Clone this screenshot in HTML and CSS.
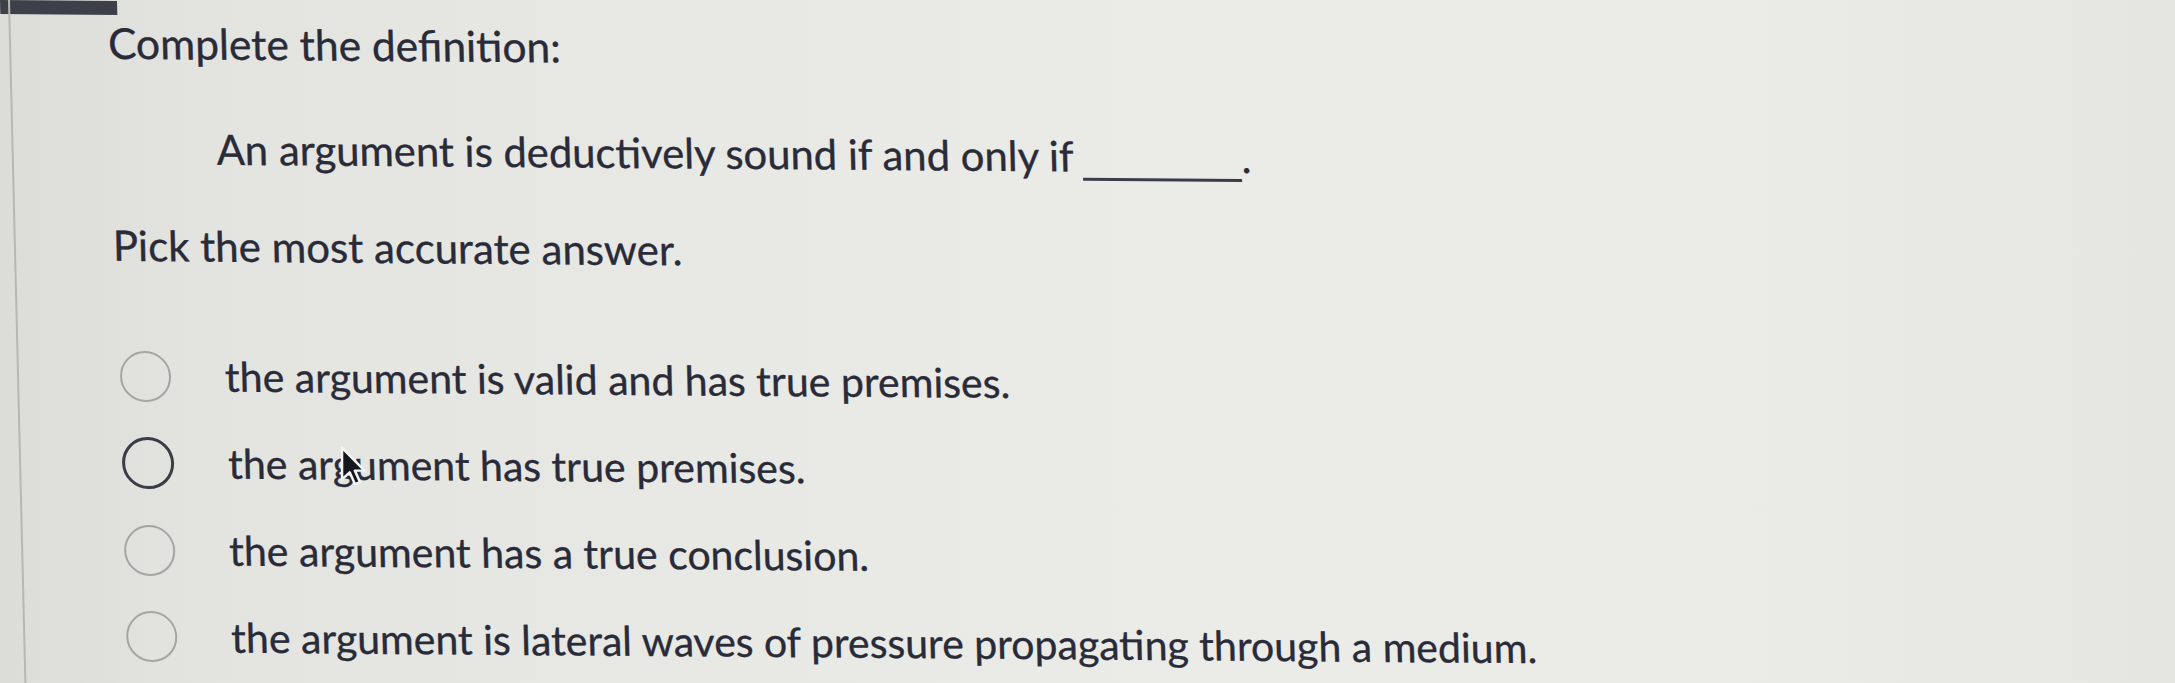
FILE: index.html
```html
<!DOCTYPE html>
<html lang="en">
<head>
<meta charset="utf-8">
<title>Quiz question</title>
<link rel="stylesheet" href="styles.css">
</head>
<body>
<div class="page">
  <div class="topbar"></div>
  <div class="panel">
    <h1 class="title">Complete the definition:</h1>
    <p class="prompt">An argument is deductively sound if and only if<span class="blank"></span>.</p>
    <p class="instruction">Pick the most accurate answer.</p>
    <ul class="options">
      <li class="option"><span class="radio"></span><span class="label">the argument is valid and has true premises.</span></li>
      <li class="option option-hover"><span class="radio"></span><span class="label">the argument has true premises.</span></li>
      <li class="option"><span class="radio"></span><span class="label">the argument has a true conclusion.</span></li>
      <li class="option"><span class="radio"></span><span class="label">the argument is lateral waves of pressure propagating through a medium.</span></li>
    </ul>
  </div>
</div>
<svg class="cursor" width="27" height="42" viewBox="0 0 14 22" aria-hidden="true">
  <path d="M1 1 L1 17.5 L5 13.8 L7.8 20 L10.4 18.9 L7.7 12.9 L12.8 12.9 Z" fill="#15161c" stroke="#f4f4f2" stroke-width="1.3" stroke-linejoin="round"/>
</svg>
</body>
</html>
```

FILE: styles.css
```css
html, body {
  margin: 0;
  padding: 0;
}

body {
  width: 2175px;
  height: 683px;
  overflow: hidden;
  position: relative;
  background: linear-gradient(90deg, #dcdcd9 0px, #e3e3e0 200px, #e8e8e5 700px, #ebebe8 1300px, #eaeae7 1800px, #e5e5e2 2175px);
  font-family: "Lato", "Liberation Sans", sans-serif;
  color: #292b38;
}

.page {
  display: flex;
  flex-direction: column;
  height: 683px;
  transform-origin: 0 0;
  transform: matrix(1, 0.008, 0.024, 1, 0, 0);
}

.topbar {
  width: 117px;
  height: 14px;
  background: #3c4149;
  flex: none;
}

.panel {
  flex: 1;
  margin-left: 8px;
  margin-top: -14px;
  padding-top: 14px;
  padding-left: 97px;
  border-left: 2px solid #b7b7b4;
  -webkit-text-stroke: 0.35px #292b38;
}

.title {
  margin: 2px 0 0 0;
  font-size: 42.5px;
  line-height: 1.2;
  font-weight: 400;
}

.prompt {
  margin: 55px 0 0 106px;
  font-size: 41.8px;
  line-height: 50.4px;
}

.blank {
  display: inline-block;
  width: 159px;
  height: 0;
  margin-left: 9px;
  border-bottom: 3px solid #3a3c48;
  vertical-align: -9px;
}

.instruction {
  margin: 47px 0 0 0;
  font-size: 42px;
  line-height: 50.4px;
}

.options {
  list-style: none;
  margin: 80px 0 0 4px;
  padding: 0;
  display: flex;
  flex-direction: column;
  gap: 35.5px;
}

.option {
  display: flex;
  align-items: center;
  gap: 54px;
  font-size: 41px;
  line-height: 50.4px;
}

.radio {
  flex: none;
  width: 47px;
  height: 47px;
  border: 2.5px solid #a5a5a3;
  border-radius: 50%;
}

.option-hover .radio {
  border-color: #3a3c48;
  border-width: 3px;
  width: 46px;
  height: 46px;
}

.cursor {
  position: absolute;
  left: 340px;
  top: 446px;
}
```
